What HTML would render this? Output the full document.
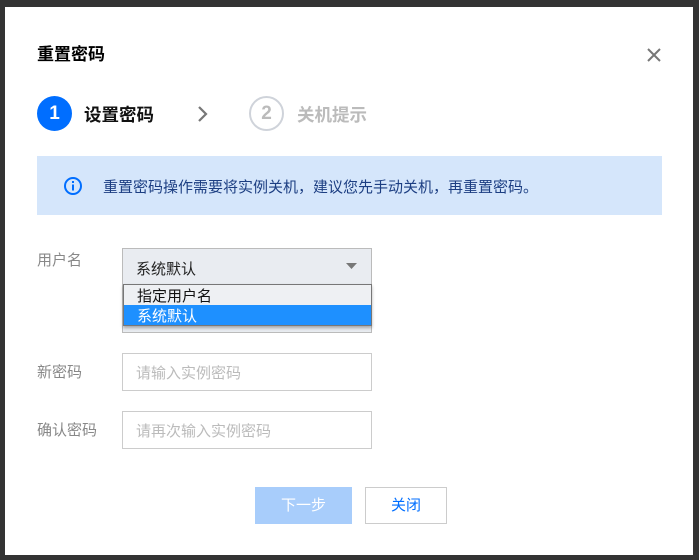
<!DOCTYPE html>
<html><head><meta charset="utf-8"><style>
*{margin:0;padding:0;box-sizing:border-box}
body{width:699px;height:560px;background:#333;position:relative;overflow:hidden;font-family:"Liberation Sans","Noto Sans CJK SC",sans-serif}
.dlg{position:absolute;left:5px;top:7px;width:688px;height:548px;background:#fff}
.a{position:absolute}
.lbl{position:absolute;left:37px;font-size:15px;color:#888}
.inp{position:absolute;left:122px;width:250px;height:38px;border:1px solid #ccc;font-size:15px;color:#bbb;padding:8px 13px}
</style></head><body>
<div class="dlg"></div>
<div class="a" style="left:37px;top:40px;font-size:17px;font-weight:bold;color:#000">重置密码</div>
<svg class="a" style="left:646px;top:47px" width="16" height="16"><path d="M2 2L14 14M14 2L2 14" stroke="#777" stroke-width="2"/></svg>
<div class="a" style="left:37px;top:96px;width:35px;height:35px;border-radius:50%;background:#006eff;color:#fff;font-weight:bold;font-size:19px;text-align:center;line-height:35px">1</div>
<div class="a" style="left:84px;top:102px;font-size:17.5px;font-weight:bold;color:#111">设置密码</div>
<svg class="a" style="left:196px;top:105px" width="14" height="18"><path d="M3 2L10 9L3 16" stroke="#777" stroke-width="2.2" fill="none"/></svg>
<div class="a" style="left:249px;top:96px;width:35px;height:35px;border-radius:50%;border:2px solid #cfd3da;color:#bbb;font-weight:bold;font-size:19px;text-align:center;line-height:31px">2</div>
<div class="a" style="left:297px;top:102px;font-size:17.5px;font-weight:bold;color:#bbb">关机提示</div>
<div class="a" style="left:37px;top:156px;width:625px;height:59px;background:#d5e6fb"></div>
<svg class="a" style="left:63px;top:176px" width="20" height="20"><circle cx="10" cy="10" r="8" stroke="#006eff" stroke-width="2" fill="none"/><rect x="9" y="8.5" width="2" height="6" fill="#006eff"/><rect x="9" y="5" width="2" height="2" fill="#006eff"/></svg>
<div class="a" style="left:103px;top:176px;font-size:15px;color:#1c3e82">重置密码操作需要将实例关机，建议您先手动关机，再重置密码。</div>
<div class="lbl" style="top:249px">用户名</div>
<div class="a" style="left:122px;top:248px;width:250px;height:85px;border:1px solid #bbb;background:#e9ecf1"></div>
<div class="a" style="left:136px;top:258px;font-size:15px;color:#222">系统默认</div>
<svg class="a" style="left:346px;top:263px" width="12" height="8"><path d="M0 0H11L5.5 6Z" fill="#777"/></svg>
<div class="a" style="left:123px;top:284px;width:249px;height:42px;border:1px solid #777;background:#eef0f3;box-shadow:0 2px 3px rgba(0,0,0,.3)"></div>
<div class="a" style="left:137px;top:285px;font-size:15px;color:#111">指定用户名</div>
<div class="a" style="left:124px;top:305px;width:247px;height:20px;background:#1e90ff"></div>
<div class="a" style="left:137px;top:305px;font-size:15px;color:#fff">系统默认</div>
<div class="lbl" style="top:361px">新密码</div>
<div class="inp" style="top:353px">请输入实例密码</div>
<div class="lbl" style="top:419px">确认密码</div>
<div class="inp" style="top:411px">请再次输入实例密码</div>
<div class="a" style="left:255px;top:487px;width:97px;height:37px;background:#a8cdfb;color:#fff;font-size:15px;text-align:center;line-height:37px">下一步</div>
<div class="a" style="left:365px;top:487px;width:82px;height:37px;border:1px solid #ccc;color:#006eff;font-size:15px;text-align:center;line-height:35px">关闭</div>
</body></html>
